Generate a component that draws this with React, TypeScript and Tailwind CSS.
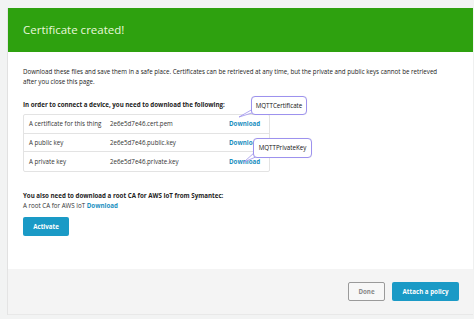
import React from 'react';

const rows = [
  { label: 'A certificate for this thing', file: '2e6e5d7e46.cert.pem' },
  { label: 'A public key', file: '2e6e5d7e46.public.key' },
  { label: 'A private key', file: '2e6e5d7e46.private.key' },
];

const Bubble: React.FC<{ text: string; className: string; tail: string }> = ({ text, className, tail }) => (
  <div className={`absolute ${className}`}>
    <svg className="absolute left-[-12px] top-[10px] overflow-visible" width="20" height="16">
      <path d={tail} fill="white" stroke="#9d92ee" strokeWidth="0.8" />
    </svg>
    <div className="relative h-full flex items-center justify-center rounded-[4px] border border-[#9d92ee] bg-white text-[6.2px] text-[#111] shadow-[0_0_1px_rgba(0,0,0,0.1)]">
      {text}
    </div>
  </div>
);

export default function App() {
  return (
    <div
      className="relative w-[474px] h-[319px] overflow-hidden bg-[#f2f3f3] pt-[8px] pl-[7px] pr-[1px]"
      style={{ fontFamily: '"Open Sans", "Noto Sans", sans-serif' }}
    >
      <div className="border-l border-[#e4e4e4]">
        {/* Header */}
        <div className="h-[44px] bg-[#2ea10f] flex items-center px-[15px]">
          <h1 className="text-[11.5px] text-[#e9f8dc]">Certificate created!</h1>
        </div>

        {/* Body */}
        <div className="h-[217px] bg-white px-[15px] pt-[15px] text-[6.2px] text-[#222] shadow-[0_1px_1px_rgba(0,0,0,0.08)]">
          <p className="leading-[10px] whitespace-nowrap">
            Download these files and save them in a safe place. Certificates can be retrieved at any time, but the private and public keys cannot be retrieved
            <br />
            after you close this page.
          </p>
          <p className="mt-[13px] leading-[10px] font-bold">
            In order to connect a device, you need to download the following:
          </p>
          <div className="mt-[4px] w-[247px] rounded-[2px] border border-[#e3e3e3]">
            {rows.map((r, i) => (
              <div
                key={r.label}
                className={`flex items-center h-[18.7px] pl-[5px] text-[#333] ${i < rows.length - 1 ? 'border-b border-[#e3e3e3]' : ''}`}
              >
                <span className="w-[81px]">{r.label}</span>
                <span className="w-[119px]">{r.file}</span>
                <span className="font-bold text-[#1b8fc0]">Download</span>
              </div>
            ))}
          </div>
          <p className="mt-[19px] leading-[10px] font-bold">
            You also need to download a root CA for AWS IoT from Symantec:
          </p>
          <p className="leading-[10px] text-[#333]">
            A root CA for AWS IoT <span className="font-bold text-[#1b8fc0]">Download</span>
          </p>
          <button className="mt-[6px] w-[46px] h-[19px] rounded-[2px] bg-[#1a9ac6] text-white font-bold text-[6.2px]">
            Activate
          </button>
        </div>

        {/* Footer */}
        <div className="h-[46px] bg-[#f4f4f4] border-b border-[#e8e8e8] flex items-center justify-end gap-[7px] pr-[14px]">
          <button className="w-[37px] h-[19px] rounded-[2px] border border-[#9a9a9a] bg-[#f7f7f7] text-[#888] font-bold text-[6.2px]">
            Done
          </button>
          <button className="w-[67px] h-[19px] rounded-[2px] bg-[#1a9ac6] text-white font-bold text-[6.2px]">
            Attach a policy
          </button>
        </div>
      </div>

      <Bubble
        text="MQTTCertificate"
        className="left-[251px] top-[96px] w-[56px] h-[19px]"
        tail="M 13 0 L 16 6 L 0 11 L 14 3 Z"
      />
      <Bubble
        text="MQTTPrivateKey"
        className="left-[253px] top-[138px] w-[59px] h-[20px]"
        tail="M 13 1 L 17 8 L 3 14 L 14 4 Z"
      />
    </div>
  );
}
